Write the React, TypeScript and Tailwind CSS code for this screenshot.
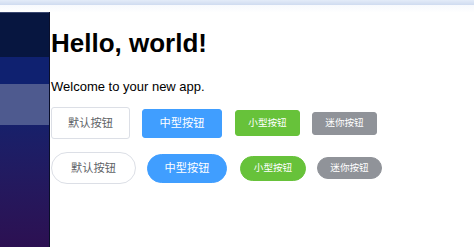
import React from "react";

const cjk = "font-['Microsoft_YaHei','Noto_Sans_CJK_SC',sans-serif]";

function Btn({
  label,
  cls,
}: {
  label: string;
  cls: string;
}) {
  return (
    <button
      className={`inline-flex items-center justify-center shrink-0 border whitespace-nowrap leading-none ${cjk} ${cls}`}
    >
      {label}
    </button>
  );
}

export default function App() {
  return (
    <div className="w-[474px] h-[247px] bg-white overflow-hidden flex flex-col font-['Liberation_Sans',Arial,sans-serif]">
      <div className="h-[5px] shrink-0 bg-gradient-to-b from-[#e3ebf8] to-[#cfdbf0]" />
      <div className="flex flex-1 pt-[7px] bg-gradient-to-b from-[#f7f9fd] to-white to-[8px]">
        <aside className="w-[50px] shrink-0 flex flex-col border-r border-[#0a0f2a]">
          <div className="h-[45px] bg-[#071640] border-t border-[#3a4770]" />
          <div className="h-[27px] bg-[#0f2170]" />
          <div className="h-[41px] bg-[#4e5a8f]" />
          <div className="flex-1 bg-gradient-to-b from-[#17206a] to-[#2c1052]" />
        </aside>
        <main className="flex-1 bg-white pl-[1px]">
          <h1 className="mt-[16px] text-[26px] leading-[30px] font-bold text-black">
            Hello, world!
          </h1>
          <p className="mt-[21px] text-[13px] leading-[16px] text-black">
            Welcome to your new app.
          </p>
          <div className="mt-[12px] flex items-center">
            <Btn
              label="默认按钮"
              cls="h-[32px] w-[79px] rounded-[3px] border-[#dcdfe6] bg-white text-[#606266] text-[11.2px]"
            />
            <Btn
              label="中型按钮"
              cls="ml-[12px] h-[29px] w-[80px] rounded-[3px] border-[#409eff] bg-[#409eff] text-white text-[11.2px]"
            />
            <Btn
              label="小型按钮"
              cls="ml-[13px] h-[26px] w-[65px] rounded-[3px] border-[#67c23a] bg-[#67c23a] text-white text-[9.6px]"
            />
            <Btn
              label="迷你按钮"
              cls="ml-[12px] h-[23px] w-[65px] rounded-[3px] border-[#909399] bg-[#909399] text-white text-[9.6px]"
            />
          </div>
          <div className="mt-[13px] flex items-center">
            <Btn
              label="默认按钮"
              cls="h-[32px] w-[85px] rounded-full border-[#dcdfe6] bg-white text-[#606266] text-[11.2px]"
            />
            <Btn
              label="中型按钮"
              cls="ml-[11px] h-[29px] w-[80px] rounded-full border-[#409eff] bg-[#409eff] text-white text-[11.2px]"
            />
            <Btn
              label="小型按钮"
              cls="ml-[13px] h-[25px] w-[66px] rounded-full border-[#67c23a] bg-[#67c23a] text-white text-[9.6px]"
            />
            <Btn
              label="迷你按钮"
              cls="ml-[11px] h-[22px] w-[65px] rounded-full border-[#909399] bg-[#909399] text-white text-[9.6px]"
            />
          </div>
        </main>
      </div>
    </div>
  );
}
